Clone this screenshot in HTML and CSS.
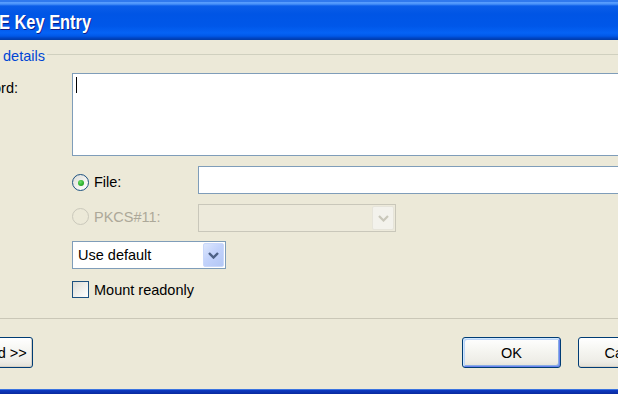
FILE: index.html
```html
<!DOCTYPE html>
<html>
<head>
<meta charset="utf-8">
<link rel="stylesheet" href="styles.css">
</head>
<body>
<div class="window">
  <div class="titlebar"><span class="title">E Key Entry</span></div>
  <div class="content">
    <div class="group-head"><span class="group-label">details</span><span class="group-line"></span></div>
    <div class="row row-pw">
      <span class="lbl-pw">ord:</span>
      <div class="textarea"><span class="caret"></span></div>
    </div>
    <div class="row row-file">
      <div class="opt"><span class="radio checked"><span class="dot"></span></span><span class="opt-text">File:</span></div>
      <div class="field"></div>
    </div>
    <div class="row row-pkcs">
      <div class="opt disabled"><span class="radio"></span><span class="opt-text">PKCS#11:</span></div>
      <div class="combo combo-disabled">
        <span class="combo-text"></span>
        <span class="combo-btn"><svg width="11" height="7" viewBox="0 0 11 7"><polyline points="1,1 5.5,5.5 10,1" fill="none" stroke="#C9C7BA" stroke-width="2.2"/></svg></span>
      </div>
    </div>
    <div class="row row-default">
      <div class="combo combo-default">
        <span class="combo-text">Use default</span>
        <span class="combo-btn"><svg width="11" height="7" viewBox="0 0 11 7"><polyline points="1,1 5.5,5.5 10,1" fill="none" stroke="#4D6185" stroke-width="2.4"/></svg></span>
      </div>
    </div>
    <div class="row row-check">
      <span class="box"></span><span class="check-text">Mount readonly</span>
    </div>
    <div class="separator"></div>
    <div class="buttons">
      <button class="btn btn-adv">Advanced &gt;&gt;</button>
      <button class="btn btn-ok">OK</button>
      <button class="btn btn-cancel">Cancel</button>
    </div>
  </div>
  <div class="frame-bottom"></div>
</div>
</body>
</html>
```

FILE: styles.css
```css
html, body {
  margin: 0;
  padding: 0;
}
body {
  width: 618px;
  height: 394px;
  overflow: hidden;
  background: #ECE9D8;
  font-family: "Liberation Sans", Arial, sans-serif;
  font-size: 14.5px;
  line-height: 17px;
  color: #000;
}
.window {
  display: flex;
  flex-direction: column;
  height: 394px;
  overflow: hidden;
}
.titlebar {
  flex: none;
  height: 40px;
  background: linear-gradient(180deg, #2F79EE 0px, #2F79EE 2px, #5BA0FF 2px, #4A93FA 4px, #0A5DE8 6px, #0055E5 14px, #0057E9 26px, #0563F5 33px, #0058E8 36px, #0045C4 38px, #003BA8 40px);
  color: #fff;
  overflow: hidden;
}
.title {
  display: inline-block;
  font-family: "Liberation Sans", Arial, sans-serif;
  font-weight: bold;
  font-size: 20px;
  line-height: 20px;
  margin-top: 12px;
  margin-left: -1px;
  white-space: nowrap;
  transform: scaleX(0.82);
  transform-origin: left center;
  text-shadow: 1px 1px 0 #0A1E8A;
}
.content {
  flex: 1;
  padding-top: 8px;
  overflow: hidden;
}
.group-head {
  display: flex;
  height: 17px;
}
.group-label {
  color: #0046D5;
  margin-left: 3px;
}
.group-line {
  flex: 1;
  height: 1px;
  margin-top: 6px;
  margin-left: 2px;
  background: #D0D0BF;
}
.row {
  display: flex;
}
.row-pw {
  margin-top: 8px;
}
.lbl-pw {
  flex: none;
  width: 79px;
  margin-left: -7px;
  padding-top: 7px;
}
.textarea {
  flex: 1;
  height: 83px;
  box-sizing: border-box;
  border: 1px solid #7F9DB9;
  background: #fff;
  margin-right: -40px;
}
.caret {
  display: block;
  width: 1px;
  height: 16px;
  background: #000;
  margin: 3px 0 0 3px;
}
.row-file {
  margin-top: 10px;
  padding-left: 72px;
  height: 28px;
}
.row-pkcs {
  margin-top: 10px;
  padding-left: 72px;
  height: 28px;
}
.opt {
  flex: none;
  width: 126px;
  display: flex;
  align-items: flex-start;
}
.row-file .radio { margin-top: 8px; }
.row-file .opt-text { padding-top: 8px; }
.row-pkcs .radio { margin-top: 4px; }
.row-pkcs .opt-text { padding-top: 5px; }
.radio {
  flex: none;
  width: 17px;
  height: 17px;
  box-sizing: border-box;
  border-radius: 50%;
  border: 1px solid #1C5180;
  background: linear-gradient(135deg, #DCDCD7 0%, #F2F2EE 55%, #FFFFFF 100%);
  display: flex;
  align-items: center;
  justify-content: center;
}
.dot {
  width: 6px;
  height: 6px;
  border-radius: 50%;
  background: radial-gradient(circle at 40% 35%, #6BE06A 0%, #2FB22F 55%, #1A8F1A 100%);
}
.opt-text {
  margin-left: 5px;
}
.opt.disabled .radio {
  border-color: #CAC8BB;
  background: #ECE9D8;
}
.opt.disabled .opt-text {
  color: #ACA899;
}
.field {
  flex: 1;
  height: 28px;
  box-sizing: border-box;
  border: 1px solid #7F9DB9;
  background: #fff;
  margin-right: -40px;
}
.combo {
  flex: none;
  display: flex;
  height: 28px;
  box-sizing: border-box;
  border: 1px solid #7F9DB9;
  padding: 1px;
  background: #fff;
}
.combo-text {
  flex: 1;
  padding-left: 4px;
  align-self: center;
  white-space: nowrap;
}
.combo-btn {
  flex: none;
  width: 21px;
  box-sizing: border-box;
  display: flex;
  align-items: center;
  justify-content: center;
  border-radius: 2px;
}
.combo-btn svg {
  display: block;
  margin-top: 1px;
}
.combo-disabled {
  width: 198px;
  border-color: #C9C7BA;
  background: #EDEADB;
}
.combo-disabled .combo-btn {
  width: 22px;
  background: #F3F2EC;
  border: 1px solid #E6E4DA;
}
.row-default {
  margin-top: 9px;
  padding-left: 72px;
}
.combo-default {
  width: 154px;
}
.combo-default .combo-btn {
  background: linear-gradient(135deg, #DDE7FD 0%, #C3D3FB 45%, #B3C7F5 100%);
  border: 1px solid #C9D8FB;
}
.row-check {
  margin-top: 12px;
  padding-left: 72px;
  align-items: center;
  height: 17px;
}
.box {
  flex: none;
  width: 17px;
  height: 17px;
  box-sizing: border-box;
  border: 1px solid #1C5180;
  background: linear-gradient(135deg, #DCDCD7 0%, #F0F0EC 55%, #FFFFFF 100%);
}
.check-text {
  margin-left: 5px;
  padding-top: 1px;
}
.separator {
  margin-top: 20px;
  height: 1px;
  background: #CAC7B7;
}
.buttons {
  display: flex;
  margin-top: 18px;
  margin-right: -58px;
}
.btn {
  flex: none;
  height: 31px;
  box-sizing: border-box;
  border: 1px solid #003C74;
  border-radius: 3px;
  padding: 0;
  font-family: "Liberation Sans", Arial, sans-serif;
  font-size: 14.5px;
  color: #000;
  white-space: nowrap;
  background: linear-gradient(180deg, #FFFFFF 0%, #F6F6F2 40%, #EEEDE7 80%, #E3E0D6 100%);
  box-shadow: inset -1px -1px 0 #D6D0C5;
}
.btn-adv {
  width: 98px;
  margin-left: -65px;
}
.btn-ok {
  width: 99px;
  margin-left: auto;
  box-shadow: inset 1px 1px 0 #CEE7FF, inset -1px -1px 0 #6982EE, inset 2px 2px 0 #BCD4F6, inset -2px -2px 0 #89ADE4;
}
.btn-cancel {
  width: 98px;
  margin-left: 17px;
}
.frame-bottom {
  flex: none;
  height: 5px;
  background: linear-gradient(180deg, #3B74E0 0px, #3B74E0 1px, #0E3BC3 1px, #0A2A9E 5px);
}
```
